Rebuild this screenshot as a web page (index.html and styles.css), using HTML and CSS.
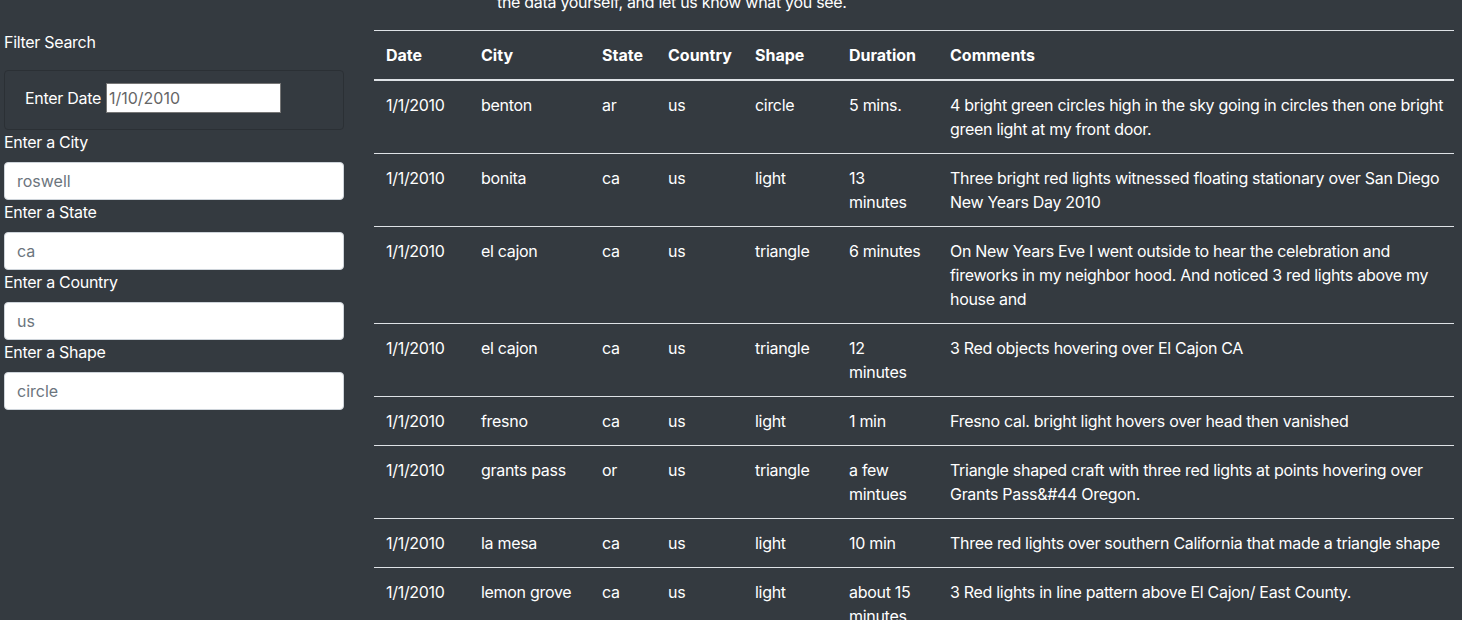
FILE: index.html
```html
<!DOCTYPE html>
<html lang="en">
<head>
<meta charset="utf-8">
<title>UFO Sightings</title>
<link rel="stylesheet" href="styles.css">
</head>
<body>
<div class="page">
  <aside class="sidebar">
    <div class="filter-title">Filter Search</div>
    <div class="date-box">
      <label class="date-label" for="datetime">Enter Date</label>
      <input class="date-input" id="datetime" type="text" value="1/10/2010">
    </div>
    <label class="field-label" for="city">Enter a City</label>
    <input class="field-input" id="city" type="text" placeholder="roswell">
    <label class="field-label" for="state">Enter a State</label>
    <input class="field-input" id="state" type="text" placeholder="ca">
    <label class="field-label" for="country">Enter a Country</label>
    <input class="field-input" id="country" type="text" placeholder="us">
    <label class="field-label" for="shape">Enter a Shape</label>
    <input class="field-input" id="shape" type="text" placeholder="circle">
  </aside>
  <main class="content">
    <p class="intro">the data yourself, and let us know what you see.</p>
    <table class="ufo-table">
      <colgroup>
        <col class="c-date"><col class="c-city"><col class="c-state"><col class="c-country"><col class="c-shape"><col class="c-duration"><col class="c-comments">
      </colgroup>
      <thead>
        <tr><th>Date</th><th>City</th><th>State</th><th>Country</th><th>Shape</th><th>Duration</th><th>Comments</th></tr>
      </thead>
      <tbody>
        <tr><td>1/1/2010</td><td>benton</td><td>ar</td><td>us</td><td>circle</td><td>5 mins.</td><td>4 bright green circles high in the sky going in circles then one bright<br>green light at my front door.</td></tr>
        <tr><td>1/1/2010</td><td>bonita</td><td>ca</td><td>us</td><td>light</td><td>13<br>minutes</td><td>Three bright red lights witnessed floating stationary over San Diego<br>New Years Day 2010</td></tr>
        <tr><td>1/1/2010</td><td>el cajon</td><td>ca</td><td>us</td><td>triangle</td><td>6 minutes</td><td>On New Years Eve I went outside to hear the celebration and<br>fireworks in my neighbor hood. And noticed 3 red lights above my<br>house and</td></tr>
        <tr><td>1/1/2010</td><td>el cajon</td><td>ca</td><td>us</td><td>triangle</td><td>12<br>minutes</td><td>3 Red objects hovering over El Cajon CA</td></tr>
        <tr><td>1/1/2010</td><td>fresno</td><td>ca</td><td>us</td><td>light</td><td>1 min</td><td>Fresno cal. bright light hovers over head then vanished</td></tr>
        <tr><td>1/1/2010</td><td>grants pass</td><td>or</td><td>us</td><td>triangle</td><td>a few<br>mintues</td><td>Triangle shaped craft with three red lights at points hovering over<br>Grants Pass&amp;#44 Oregon.</td></tr>
        <tr><td>1/1/2010</td><td>la mesa</td><td>ca</td><td>us</td><td>light</td><td>10 min</td><td>Three red lights over southern California that made a triangle shape</td></tr>
        <tr><td>1/1/2010</td><td>lemon grove</td><td>ca</td><td>us</td><td>light</td><td>about 15<br>minutes</td><td>3 Red lights in line pattern above El Cajon/ East County.</td></tr>
      </tbody>
    </table>
  </main>
</div>
</body>
</html>
```
FILE: styles.css
```css
* { box-sizing: border-box; }
html, body {
  margin: 0;
  background: #343a40;
  color: #fff;
  font-family: Inter, "Liberation Sans", Arial, sans-serif;
  font-size: 16px;
  line-height: 24px;
  letter-spacing: -0.3px;
}
.page {
  display: flex;
  gap: 30px;
  padding: 0 8px 0 4px;
  overflow: hidden;
  height: 620px;
}
.sidebar {
  width: 340px;
  flex: 0 0 340px;
  padding-top: 30px;
  display: flex;
  flex-direction: column;
}
.filter-title { margin-bottom: 16px; }
.date-box {
  border: 1px solid #2b3035;
  border-radius: 4px;
  padding: 12px 0 16px 20px;
  display: flex;
  align-items: center;
  gap: 5px;
}
.date-input {
  width: 175px;
  height: 30px;
  border: 1px solid #767676;
  border-radius: 0;
  background: #fff;
  color: #666;
  font: inherit;
  padding: 1px 2px;
}
.field-label { display: block; margin-bottom: 8px; }
.field-input {
  width: 340px;
  height: 38px;
  border: 1px solid #ced4da;
  border-radius: 4px;
  background: #fff;
  color: #495057;
  font: inherit;
  padding: 6px 12px;
}
.field-input::placeholder { color: #6c757d; opacity: 1; }
.content { flex: 1; min-width: 0; }
.intro {
  margin: -10px 0 16px;
  padding-left: 123px;
}
.ufo-table {
  width: 100%;
  border-collapse: collapse;
  table-layout: fixed;
}
.c-date { width: 95px; }
.c-city { width: 121px; }
.c-state { width: 66px; }
.c-country { width: 87px; }
.c-shape { width: 94px; }
.c-duration { width: 101px; }
.ufo-table th,
.ufo-table td {
  padding: 12px;
  text-align: left;
  white-space: nowrap;
  border-top: 1px solid #dee2e6;
}
.ufo-table th {
  font-weight: 700;
  letter-spacing: 0;
  vertical-align: bottom;
  border-bottom: 2px solid #dee2e6;
}
.ufo-table td { vertical-align: top; font-weight: 400; }
```
